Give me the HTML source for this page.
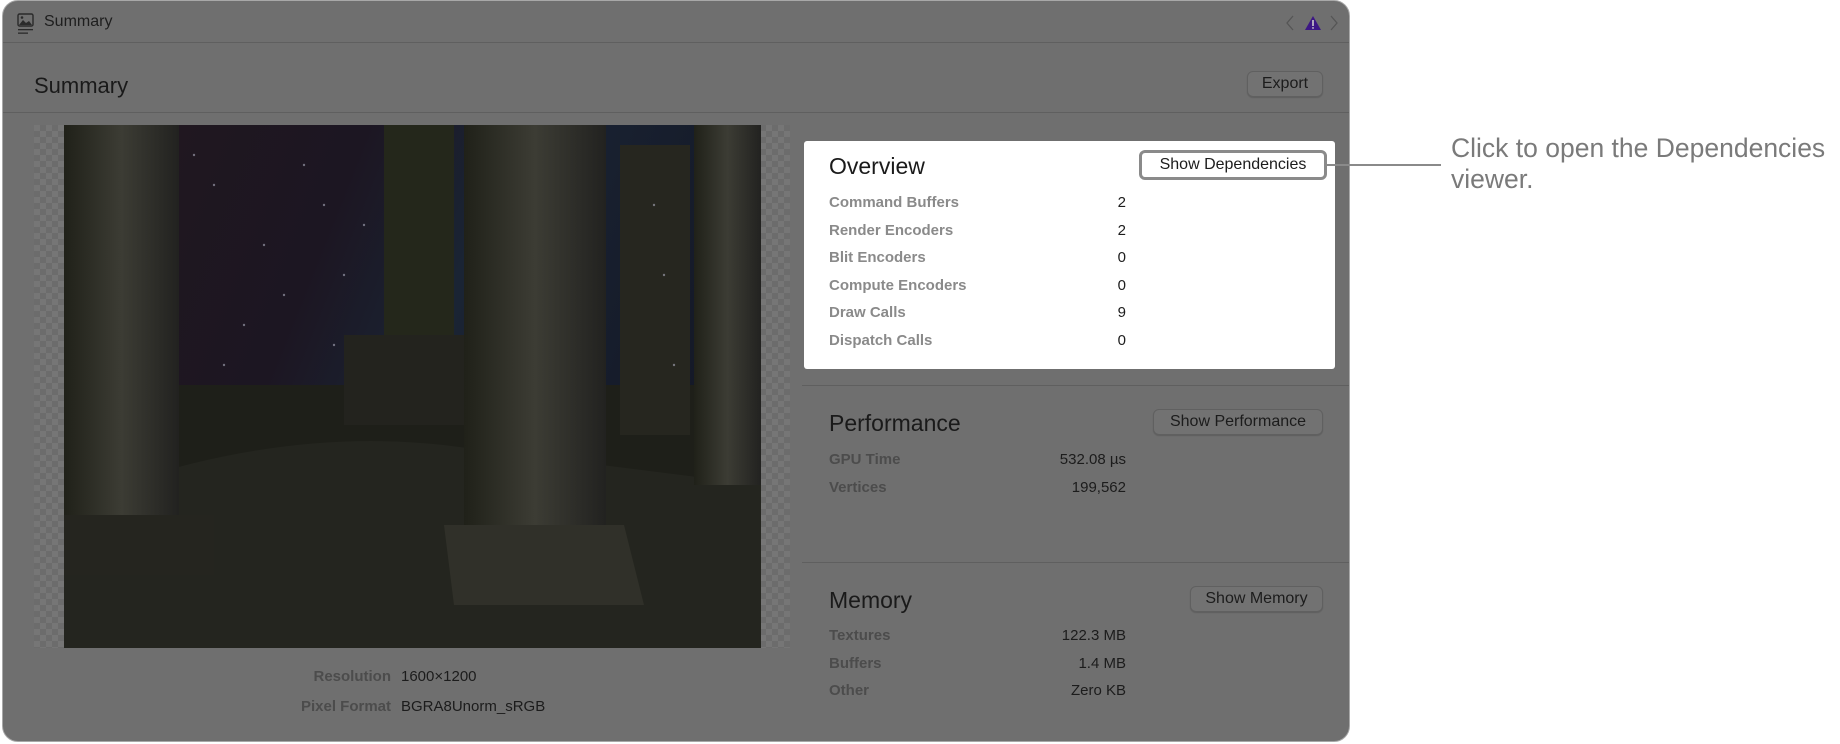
<!DOCTYPE html>
<html><head><meta charset="utf-8"><style>
*{margin:0;padding:0;box-sizing:border-box}
body{width:1840px;height:744px;background:#fff;position:relative;overflow:hidden;font-family:"Liberation Sans",sans-serif}
.win{position:absolute;left:2px;top:0;width:1348px;height:742px;background:#6f6f6f;border:1px solid #a8a8a8;border-radius:16px;overflow:hidden}
.abs{position:absolute}
.hl{position:absolute;height:1px;background:#5f5f5f}
.lbl{position:absolute;left:828px;font-size:15px;font-weight:bold;color:#4c4c4c;line-height:18px}
.val{position:absolute;right:223px;font-size:15px;color:#1c1c1c;line-height:18px;text-align:right}
.btn{position:absolute;border:1px solid #606060;border-radius:6px;background:#727272;font-size:16px;color:#1c1c1c;text-align:center;box-shadow:0 1px 1px rgba(0,0,0,.15)}
.h2{position:absolute;left:828px;font-size:23px;color:#1a1a1a}
</style></head><body>
<div class="win">
  <svg class="abs" style="left:14px;top:12px" width="18" height="22" viewBox="0 0 18 22"><rect x="1" y="1" width="15" height="12" rx="1.5" fill="none" stroke="#2a2a2a" stroke-width="1.4"/><path d="M2 12 L6 7 L9 10 L12 8 L15 12Z" fill="#2a2a2a"/><circle cx="5" cy="4.5" r="1.3" fill="#2a2a2a"/><rect x="1" y="16" width="15" height="1.3" fill="#2a2a2a"/><rect x="1" y="19.5" width="10" height="1.3" fill="#2a2a2a"/></svg>
  <div class="abs" style="left:41px;top:12px;font-size:16px;color:#1e1e1e">Summary</div>
  <svg class="abs" style="left:1282px;top:12px" width="56" height="20" viewBox="0 0 56 20"><path d="M8 3 L2 10 L8 17" fill="none" stroke="#555" stroke-width="1.3"/><path d="M28 3 L36 17 L20 17Z" fill="#3d1785"/><rect x="27.2" y="7" width="1.6" height="6" fill="#ccc"/><rect x="27.2" y="14.2" width="1.6" height="1.5" fill="#ccc"/><path d="M46 3 L52 10 L46 17" fill="none" stroke="#555" stroke-width="1.3"/></svg>
  <div class="hl" style="left:0;top:41px;width:1348px"></div>
  <div class="abs" style="left:31px;top:72px;font-size:22px;color:#1a1a1a">Summary</div>
  <div class="btn" style="left:1244px;top:70px;width:76px;height:26px;line-height:24px">Export</div>
  <div class="hl" style="left:0;top:111px;width:1348px"></div>
  <div class="abs" style="left:31px;top:124px;width:756px;height:523px;background-color:#767676;background-image:linear-gradient(45deg,#6c6c6c 25%,transparent 25%,transparent 75%,#6c6c6c 75%),linear-gradient(45deg,#6c6c6c 25%,transparent 25%,transparent 75%,#6c6c6c 75%);background-size:12px 12px;background-position:0 0,6px 6px"></div>
  <svg class="abs" style="left:61px;top:124px" width="697" height="523" viewBox="0 0 697 523">
    <defs><linearGradient id="sky" x1="0" y1="0" x2="1" y2="0.3"><stop offset="0" stop-color="#22181e"/><stop offset=".4" stop-color="#1c1622"/><stop offset=".6" stop-color="#1a2434"/><stop offset="1" stop-color="#141826"/></linearGradient>
    <linearGradient id="col" x1="0" x2="1"><stop offset="0" stop-color="#202119"/><stop offset=".5" stop-color="#3c3c34"/><stop offset="1" stop-color="#222220"/></linearGradient></defs>
    <rect width="697" height="523" fill="url(#sky)"/>
    <rect y="260" width="697" height="263" fill="#1e1f19"/>
    <path d="M0 523 L0 380 Q200 300 380 320 L697 360 L697 523Z" fill="#24251f"/>
    <rect x="320" y="0" width="70" height="270" fill="#24271b"/>
    <rect x="280" y="210" width="150" height="90" fill="#23231e"/>
    <rect x="556" y="20" width="70" height="290" fill="#26261f"/>
    <rect x="0" y="0" width="115" height="400" fill="url(#col)"/>
    <rect x="0" y="390" width="150" height="60" fill="#25251f"/>
    <rect x="400" y="0" width="142" height="420" fill="url(#col)"/>
    <path d="M380 400 L560 400 L580 480 L390 480Z" fill="#303029"/>
    <rect x="630" y="0" width="67" height="360" fill="url(#col)"/>
    <g fill="#aab" opacity=".6"><circle cx="150" cy="60" r="1.2"/><circle cx="200" cy="120" r="1.2"/><circle cx="260" cy="80" r="1.2"/><circle cx="180" cy="200" r="1.2"/><circle cx="280" cy="150" r="1.2"/><circle cx="600" cy="150" r="1.2"/><circle cx="240" cy="40" r="1.2"/><circle cx="130" cy="30" r="1.2"/><circle cx="300" cy="100" r="1.2"/><circle cx="220" cy="170" r="1.2"/><circle cx="160" cy="240" r="1.2"/><circle cx="590" cy="80" r="1.2"/><circle cx="610" cy="240" r="1.2"/><circle cx="270" cy="220" r="1.2"/></g>
  </svg>
  <div class="abs" style="left:0;top:667px;width:388px;text-align:right;font-size:15px;font-weight:bold;color:#4c4c4c">Resolution</div>
  <div class="abs" style="left:398px;top:667px;font-size:15px;color:#1c1c1c">1600×1200</div>
  <div class="abs" style="left:0;top:697px;width:388px;text-align:right;font-size:15px;font-weight:bold;color:#4c4c4c">Pixel Format</div>
  <div class="abs" style="left:398px;top:697px;font-size:15px;color:#1c1c1c">BGRA8Unorm_sRGB</div>

  <div class="abs" style="left:801px;top:140px;width:531px;height:228px;background:#fff;border-radius:3px"></div>
  <div class="h2" style="left:826px;top:152px">Overview</div>
  <div class="abs" style="left:1136px;top:149px;width:188px;height:30px;border:3px solid #8a8a8a;border-radius:6px;background:#fff;font-size:16px;color:#1c1c1c;text-align:center;line-height:24px">Show Dependencies</div>
  <div class="lbl" style="left:826px;top:193px;color:#8a8a8a">Command Buffers</div><div class="val" style="top:193px">2</div>
  <div class="lbl" style="left:826px;top:221px;color:#8a8a8a">Render Encoders</div><div class="val" style="top:221px">2</div>
  <div class="lbl" style="left:826px;top:248px;color:#8a8a8a">Blit Encoders</div><div class="val" style="top:248px">0</div>
  <div class="lbl" style="left:826px;top:276px;color:#8a8a8a">Compute Encoders</div><div class="val" style="top:276px">0</div>
  <div class="lbl" style="left:826px;top:303px;color:#8a8a8a">Draw Calls</div><div class="val" style="top:303px">9</div>
  <div class="lbl" style="left:826px;top:331px;color:#8a8a8a">Dispatch Calls</div><div class="val" style="top:331px">0</div>

  <div class="hl" style="left:799px;top:384px;width:549px"></div>
  <div class="h2" style="left:826px;top:409px">Performance</div>
  <div class="btn" style="left:1150px;top:408px;width:170px;height:26px;line-height:24px">Show Performance</div>
  <div class="lbl" style="left:826px;top:450px">GPU Time</div><div class="val" style="top:450px">532.08 µs</div>
  <div class="lbl" style="left:826px;top:478px">Vertices</div><div class="val" style="top:478px">199,562</div>

  <div class="hl" style="left:799px;top:561px;width:549px"></div>
  <div class="h2" style="left:826px;top:586px">Memory</div>
  <div class="btn" style="left:1187px;top:585px;width:133px;height:26px;line-height:24px">Show Memory</div>
  <div class="lbl" style="left:826px;top:626px">Textures</div><div class="val" style="top:626px">122.3 MB</div>
  <div class="lbl" style="left:826px;top:654px">Buffers</div><div class="val" style="top:654px">1.4 MB</div>
  <div class="lbl" style="left:826px;top:681px">Other</div><div class="val" style="top:681px">Zero KB</div>
</div>
<div class="abs" style="left:1326px;top:164px;width:115px;height:2px;background:#8a8a8a"></div>
<div class="abs" style="left:1451px;top:133px;font-size:26.5px;line-height:31px;color:#7a7a7a">Click to open the Dependencies<br>viewer.</div>
</body></html>
